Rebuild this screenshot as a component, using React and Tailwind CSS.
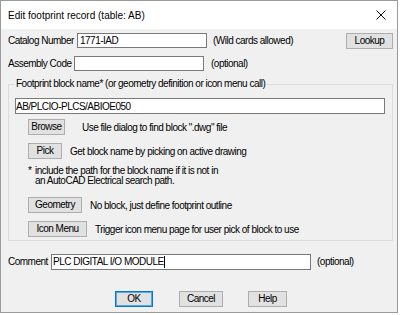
import React from "react";

const Button = ({ width, isDefault, children }) => (
  <button
    className={`${width} h-[16px] shrink-0 flex items-center justify-center leading-none bg-[#e1e1e1] border ${
      isDefault ? "border-[#0078d7] shadow-[inset_0_0_0_1px_#5aa5e6]" : "border-[#adadad]"
    }`}
  >
    {children}
  </button>
);

const App = () => {
  return (
    <div className="w-[400px] h-[315px] bg-white text-black font-['Liberation_Sans',Arial,sans-serif]">
      <div className="w-[398px] h-[313px] border border-[#9a9a9a] bg-[#f0f0f0] flex flex-col">
        {/* Title bar */}
        <div className="h-[28px] bg-white flex items-center pl-[7px] pr-[11px] text-[10px]">
          <span>Edit footprint record (table: AB)</span>
          <svg className="ml-auto" width="10" height="10" viewBox="0 0 10 10">
            <path d="M0.5 0.5 L9.5 9.5 M9.5 0.5 L0.5 9.5" stroke="#111" strokeWidth="1" fill="none" />
          </svg>
        </div>

        {/* Body */}
        <div className="flex-1 pl-[7px] pr-[4px] text-[10px] tracking-[-0.5px]">
          <div className="mt-[3px] h-[17px] flex items-center">
            <span className="w-[69px] shrink-0 whitespace-nowrap">Catalog Number</span>
            <div className="w-[130px] h-[15px] shrink-0 border border-[#7a7a7a] bg-white flex items-center pl-[2px]">
              1771-IAD
            </div>
            <span className="ml-[6px]">(Wild cards allowed)</span>
            <div className="ml-auto">
              <Button width="w-[47px]">Lookup</Button>
            </div>
          </div>

          <div className="mt-[6px] h-[17px] flex items-center">
            <span className="w-[66px] shrink-0 whitespace-nowrap">Assembly Code</span>
            <div className="w-[130px] h-[15px] shrink-0 border border-[#7a7a7a] bg-white" />
            <span className="ml-[7px]">(optional)</span>
          </div>

          {/* Group box */}
          <fieldset className="mt-[6px] w-[385px] border border-[#dcdcdc] pl-[5px] pb-[3px]">
            <legend className="px-[2px] leading-[12px]">
              Footprint block name* (or geometry definition or icon menu call)
            </legend>

            <div className="mt-[8px] ml-[1px] w-[370px] h-[16px] border border-[#7a7a7a] bg-white flex items-center">
              AB/PLCIO-PLCS/ABIOE050
            </div>

            <div className="mt-[5px] flex items-center ml-[14px]">
              <Button width="w-[37px]">Browse</Button>
              <span className="ml-[17px]">Use file dialog to find block ".dwg" file</span>
            </div>

            <div className="mt-[8px] flex items-center ml-[14px]">
              <Button width="w-[34px]">Pick</Button>
              <span className="ml-[8px]">Get block name by picking on active drawing</span>
            </div>

            <div className="mt-[7px] flex ml-[14px] leading-[10px]">
              <span className="w-[7px]">*</span>
              <div>
                <div>include the path for the block name if it is not in</div>
                <div>an AutoCAD Electrical search path.</div>
              </div>
            </div>

            <div className="mt-[11px] flex items-center ml-[14px]">
              <Button width="w-[54px]">Geometry</Button>
              <span className="ml-[8px]">No block, just define footprint outline</span>
            </div>

            <div className="mt-[8px] flex items-center ml-[14px]">
              <Button width="w-[59px]">Icon Menu</Button>
              <span className="ml-[8px]">Trigger icon menu page for user pick of block to use</span>
            </div>
          </fieldset>

          <div className="mt-[12px] h-[17px] flex items-center">
            <span className="w-[43px] shrink-0">Comment</span>
            <div className="w-[260px] h-[16px] shrink-0 border border-[#7a7a7a] bg-white flex items-center pl-[1px]">
              <span>PLC DIGITAL I/O MODULE</span>
              <span className="w-[1px] h-[12px] bg-black" />
            </div>
            <span className="ml-[6px]">(optional)</span>
          </div>

          <div className="mt-[21px] flex items-center ml-[107px]">
            <Button width="w-[38px]" isDefault>
              OK
            </Button>
            <div className="ml-[26px]">
              <Button width="w-[44px]">Cancel</Button>
            </div>
            <div className="ml-[25px]">
              <Button width="w-[39px]">Help</Button>
            </div>
          </div>
        </div>
      </div>
    </div>
  );
};

export default App;
